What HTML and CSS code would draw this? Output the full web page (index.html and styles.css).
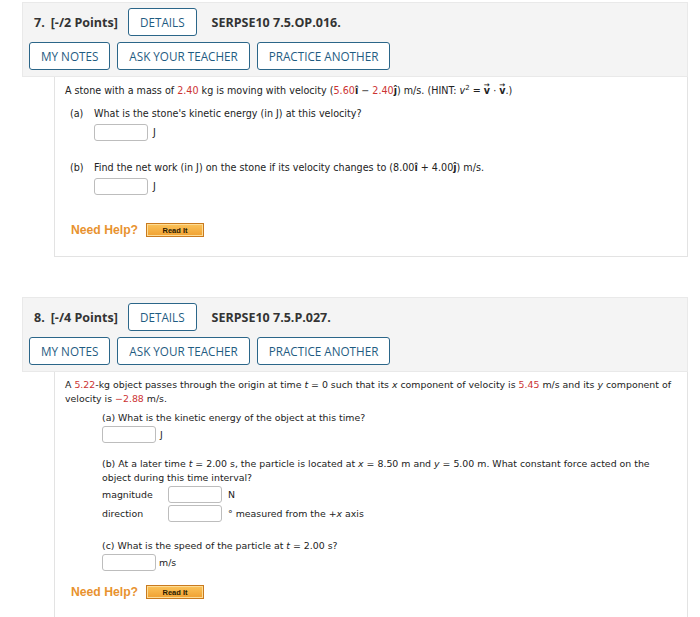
FILE: index.html
```html
<!DOCTYPE html>
<html>
<head>
<meta charset="utf-8">
<link rel="stylesheet" href="styles.css">
</head>
<body>
<div class="page">
  <section class="question q7">
    <div class="qhead">
      <div class="row">
        <span class="qnum">7.<span class="pts">[-/2 Points]</span></span>
        <span class="btn">DETAILS</span>
        <span class="qid">SERPSE10 7.5.OP.016.</span>
      </div>
      <div class="row">
        <span class="btn">MY NOTES</span>
        <span class="btn">ASK YOUR TEACHER</span>
        <span class="btn">PRACTICE ANOTHER</span>
      </div>
    </div>
    <div class="qbody">
      <p class="intro">A stone with a mass of <span class="red">2.40</span> kg is moving with velocity (<span class="red">5.60</span><b>î</b> − <span class="red">2.40</span><b>ĵ</b>) m/s. (HINT: <i>v</i><sup>2</sup> = <b class="vec">v</b> · <b class="vec">v</b>.)</p>
      <div class="part">
        <div class="ptext"><span class="plabel">(a)</span>What is the stone's kinetic energy (in J) at this velocity?</div>
        <div class="answer"><span class="inp"></span><span class="unit">J</span></div>
      </div>
      <div class="part partb">
        <div class="ptext"><span class="plabel">(b)</span>Find the net work (in J) on the stone if its velocity changes to (8.00<b>î</b> + 4.00<b>ĵ</b>) m/s.</div>
        <div class="answer"><span class="inp"></span><span class="unit">J</span></div>
      </div>
      <div class="help"><span class="needhelp">Need Help?</span><span class="readit">Read It</span></div>
    </div>
  </section>

  <section class="question q8">
    <div class="qhead">
      <div class="row">
        <span class="qnum">8.<span class="pts">[-/4 Points]</span></span>
        <span class="btn">DETAILS</span>
        <span class="qid">SERPSE10 7.5.P.027.</span>
      </div>
      <div class="row">
        <span class="btn">MY NOTES</span>
        <span class="btn">ASK YOUR TEACHER</span>
        <span class="btn">PRACTICE ANOTHER</span>
      </div>
    </div>
    <div class="qbody body2">
      <p class="intro2">A <span class="red">5.22</span>-kg object passes through the origin at time <i>t</i> = 0 such that its <i>x</i> component of velocity is <span class="red">5.45</span> m/s and its <i>y</i> component of velocity is <span class="red">−2.88</span> m/s.</p>
      <div class="sub">
        <div class="s-a">
          <div class="stext">(a) What is the kinetic energy of the object at this time?</div>
          <div class="answer2"><span class="inp"></span><span class="unit">J</span></div>
        </div>
        <div class="s-b">
          <div class="stext">(b) At a later time <i>t</i> = 2.00 s, the particle is located at <i>x</i> = 8.50 m and <i>y</i> = 5.00 m. What constant force acted on the object during this time interval?</div>
          <div class="grid">
            <span class="glabel">magnitude</span><span class="inp"></span><span class="unit">N</span>
            <span class="glabel">direction</span><span class="inp"></span><span class="unit">° measured from the +<i>x</i> axis</span>
          </div>
        </div>
        <div class="s-c">
          <div class="stext">(c) What is the speed of the particle at <i>t</i> = 2.00 s?</div>
          <div class="answer2"><span class="inp"></span><span class="unit">m/s</span></div>
        </div>
      </div>
      <div class="help help2"><span class="needhelp">Need Help?</span><span class="readit">Read It</span></div>
    </div>
  </section>
</div>
</body>
</html>
```

FILE: styles.css
```css
* { box-sizing: border-box; }
html, body { margin: 0; padding: 0; background: #fff; }
body { font-family: "DejaVu Sans", Verdana, sans-serif; color: #222; }
.page { padding: 2px 12px 0 22px; }

.question { margin-bottom: 40px; }
.question:last-child { margin-bottom: 0; }
.qhead {
  background: #f4f4f4;
  border: 1px solid #e9e9e9;
  padding: 5px 6px 6px 6px;
}
.row { display: flex; align-items: center; gap: 7px; }
.row + .row { margin-top: 6px; }
.qnum, .qid {
  font-family: "Open Sans", sans-serif;
  font-weight: 700;
  font-size: 12.5px;
  color: #333;
}
.qnum { padding-left: 5px; width: 92px; }
.pts { margin-left: 6px; }
.qid { margin-left: 8px; }
.btn {
  display: inline-flex; align-items: center; justify-content: center;
  height: 28px;
  padding: 0 11px;
  border: 1.5px solid #2b6689;
  border-radius: 3px;
  background: #fff;
  font-family: "Open Sans", sans-serif;
  font-size: 11.7px;
  font-weight: 500;
  color: #1f5c82;
}

.qbody {
  margin-left: 32px;
  border-left: 1px solid #e3e3e3;
  border-right: 1px solid #e3e3e3;
  border-bottom: 1px solid #e3e3e3;
  padding: 6px 10px 19px 10px;
  font-size: 9.6px;
}
.red { color: #cc3333; }
sup { font-size: 7px; line-height: 0; }
.vec { position: relative; }
.vec::before {
  content: "→"; position: absolute; top: -8px; left: 0; font-size: 7px; font-weight: 700;
}

.intro { margin: 0; line-height: 16px; }
.part { margin-top: 7px; }
.ptext { line-height: 16px; padding-left: 5px; }
.plabel { display: inline-block; width: 24px; }
.answer { display: flex; align-items: center; margin-top: 2px; padding-left: 29px; }
.inp {
  display: inline-block; width: 54px; height: 17px;
  border: 1px solid #bdbdbd; border-radius: 3px; background: #fff;
}
.unit { margin-left: 5px; }
.partb { margin-top: 19px; }

.help { display: flex; align-items: center; margin-top: 28px; padding-left: 6px; }
.needhelp {
  font-family: "Liberation Sans", Arial, sans-serif;
  font-weight: 700; font-size: 12.2px; color: #e8922f;
  margin-right: 8px;
}
.readit {
  display: inline-flex; align-items: center; justify-content: center;
  width: 58px; height: 14px;
  background: linear-gradient(#fbc35a, #f0a030);
  border: 1px solid #c97a1f;
  box-shadow: inset 0 0 0 1px #fddc95;
  font-family: "Liberation Sans", Arial, sans-serif;
  font-weight: 700; font-size: 7.5px; color: #2a1a00;
}

.body2 { font-size: 9.4px; padding-top: 6px; padding-bottom: 18px; }
.intro2 { margin: 0; line-height: 14px; }
.sub { padding-left: 37px; padding-right: 24px; }
.stext { line-height: 14px; }
.s-a { margin-top: 5px; }
.answer2 { display: flex; align-items: center; margin-top: 1px; }
.answer2 .unit { margin-left: 4px; }
.s-b { margin-top: 14px; }
.grid {
  display: grid;
  grid-template-columns: 60px 54px auto;
  column-gap: 6px; row-gap: 2px;
  align-items: center;
  margin-top: 1px;
}
.grid .unit { margin-left: 0; }
.s-c { margin-top: 17px; }
.s-c .unit { margin-left: 3px; }
.help2 { margin-top: 14px; }
```
